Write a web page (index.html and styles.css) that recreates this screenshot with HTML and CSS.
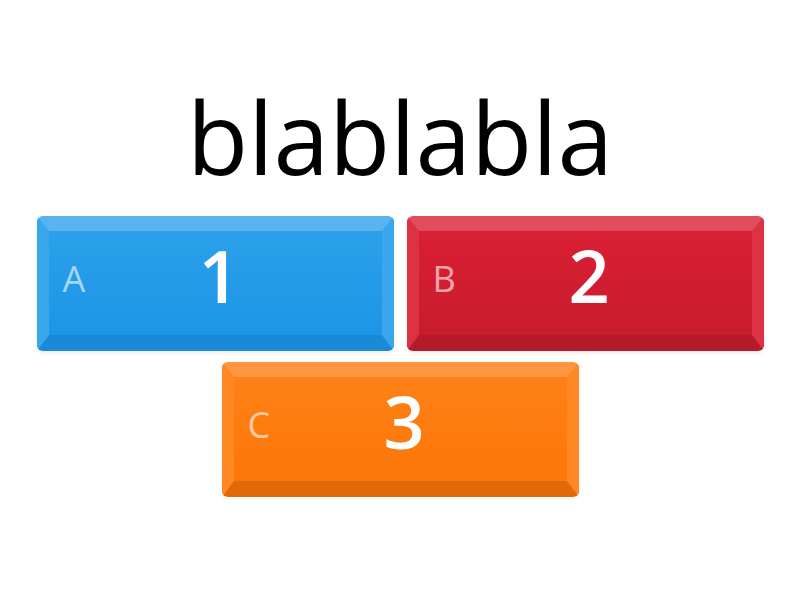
FILE: index.html
```html
<!DOCTYPE html>
<html lang="en">
<head>
  <meta charset="UTF-8">
  <meta name="viewport" content="width=device-width, initial-scale=1.0">
  <title>Quiz</title>
  <link rel="stylesheet" href="styles.css">
</head>
<body>
  <div class="quiz">
    <h1 class="question">blablabla</h1>

    <div class="answers">
      <button class="answer blue">
        <span class="letter">A</span>
        <span class="text">1</span>
      </button>
      <button class="answer red">
        <span class="letter">B</span>
        <span class="text">2</span>
      </button>
      <button class="answer orange">
        <span class="letter">C</span>
        <span class="text">3</span>
      </button>
    </div>
  </div>
</body>
</html>
```

FILE: styles.css
```css
body {
  font-family: "Open Sans", "DejaVu Sans", sans-serif;
  background-color: #ffffff;
  margin: 0;
  padding: 0;
}

.quiz {
  padding-top: 76px;
}

.question {
  margin: 0 0 20px;
  font-size: 100px;
  font-weight: 400;
  line-height: 120px;
  text-align: center;
  color: #000000;
}

.answers {
  width: 728px;
  margin: 0 auto;
  display: flex;
  flex-wrap: wrap;
  justify-content: center;
  column-gap: 13px;
  row-gap: 11px;
}

/* bevelled tile, borders make the slanted corners */
.answer {
  box-sizing: border-box;
  width: 357px;
  height: 135px;
  padding: 0 0 16px 14px;
  border-style: solid;
  border-width: 15px 12px 16px 12px;
  border-radius: 6px;
  display: grid;
  grid-template-columns: 40px 1fr 46px;
  align-items: center;
  font-family: inherit;
  color: #ffffff;
  cursor: pointer;
  box-shadow: 0 2px 4px rgba(0, 0, 0, 0.08);
}

.letter {
  grid-column: 1;
  margin-top: 8px;
  font-size: 36px;
  line-height: 36px;
  text-align: left;
  color: rgba(255, 255, 255, 0.6);
}

.text {
  grid-column: 2;
  font-size: 72px;
  font-weight: 600;
  line-height: 72px;
  text-align: center;
}

.blue {
  background: linear-gradient(#2ca0ea, #1b96e6);
  border-color: #58b3ef #3aa6eb #1b8ad6 #3aa6eb;
}

.red {
  background: linear-gradient(#da1f34, #c91b2e);
  border-color: #e24d5d #dc3244 #b41a2b #dc3244;
}

.orange {
  background: linear-gradient(#fe8116, #fd7609);
  border-color: #fe9541 #fe8823 #e0690a #fe8823;
}
```
